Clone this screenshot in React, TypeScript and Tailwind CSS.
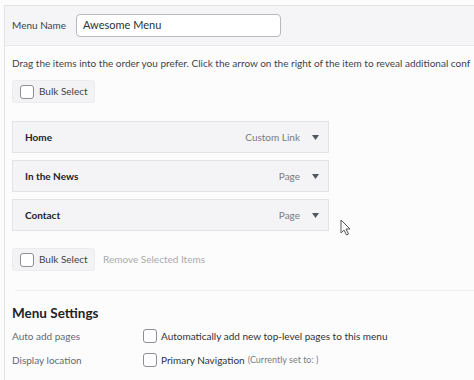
import React from "react";

const Box = () => (
  <span className="inline-block w-[14px] h-[14px] rounded-[3px] border border-[#8c8f94] bg-white shrink-0" />
);

const BulkButton = () => (
  <div className="flex items-center gap-[5px] h-[23px] w-[83px] pl-[7px] rounded-[3px] bg-[#f3f2f4] border border-[#ecebee] text-[10px] text-[#3c434a] whitespace-nowrap">
    <Box />
    <span>Bulk Select</span>
  </div>
);

const Item = ({ title, type }: { title: string; type: string }) => (
  <div className="h-[32px] w-[317px] flex items-center bg-[#f4f3f5] border border-[#e3e2e5] pl-[12px] pr-[9px]">
    <span className="text-[10px] font-bold text-[#1d2327]">{title}</span>
    <span className="ml-auto text-[10px] text-[#787c82]">{type}</span>
    <svg width="7" height="5" viewBox="0 0 7 5" className="ml-[12px]">
      <path d="M0 0 L7 0 L3.5 5 Z" fill="#50575e" />
    </svg>
  </div>
);

export default function App() {
  return (
    <div
      className="w-[474px] h-[380px] bg-[#fdfcfd] pt-[5px] pl-[4px] relative overflow-hidden"
      style={{ fontFamily: "Lato, 'Noto Sans', sans-serif" }}
    >
      <div className="border-l border-t border-[#e4e3e6] h-full">
        <div className="h-[40px] bg-[#f5f4f6] border-b border-[#e9e8eb] flex items-center pl-[7px]">
          <span className="w-[64px] text-[10px] text-[#3c434a]">Menu Name</span>
          <div className="w-[205px] h-[23px] rounded-[4px] border border-[#b9b9bd] bg-white flex items-center px-[6px] text-[11px] text-[#2c3338]">
            Awesome Menu
          </div>
        </div>
        <div className="pl-[7px]">
          <div className="mt-[10px] w-[462px] overflow-hidden">
            <p className="text-[10px] leading-[14px] text-[#3c434a] whitespace-nowrap">
              Drag the items into the order you prefer. Click the arrow on the right of the item to reveal additional conf
            </p>
          </div>
          <div className="mt-[10px]">
            <BulkButton />
          </div>
          <div className="mt-[18px] flex flex-col gap-[7px]">
            <Item title="Home" type="Custom Link" />
            <Item title="In the News" type="Page" />
            <Item title="Contact" type="Page" />
          </div>
          <div className="mt-[17px] flex items-center gap-[8px]">
            <BulkButton />
            <span className="text-[10px] text-[#a7aaad]">Remove Selected Items</span>
          </div>
          <div className="mt-[19px] border-t border-[#efeef1] ml-[3px]" />
          <h3 className="mt-[13px] text-[13.5px] leading-[18px] font-bold text-[#1d2327]">Menu Settings</h3>
          <div className="mt-[2px] flex items-center h-[24px] text-[10px]">
            <span className="w-[131px] text-[#646970]">Auto add pages</span>
            <Box />
            <span className="ml-[4px] text-[#2c3338]">Automatically add new top-level pages to this menu</span>
          </div>
          <div className="flex items-center h-[24px] text-[10px]">
            <span className="w-[131px] text-[#646970]">Display location</span>
            <Box />
            <span className="ml-[4px] text-[#2c3338]">Primary Navigation</span>
            <span className="ml-[3px] text-[9px] text-[#787c82]">(Currently set to: )</span>
          </div>
        </div>
      </div>
      <svg className="absolute left-[340px] top-[219px]" width="12" height="18" viewBox="0 0 12 18">
        <path d="M1 1 L1 14 L4 11 L6.5 16 L8.5 15 L6 10 L10 10 Z" fill="#ffffff" stroke="#555" strokeWidth="1" strokeLinejoin="round" />
      </svg>
    </div>
  );
}
